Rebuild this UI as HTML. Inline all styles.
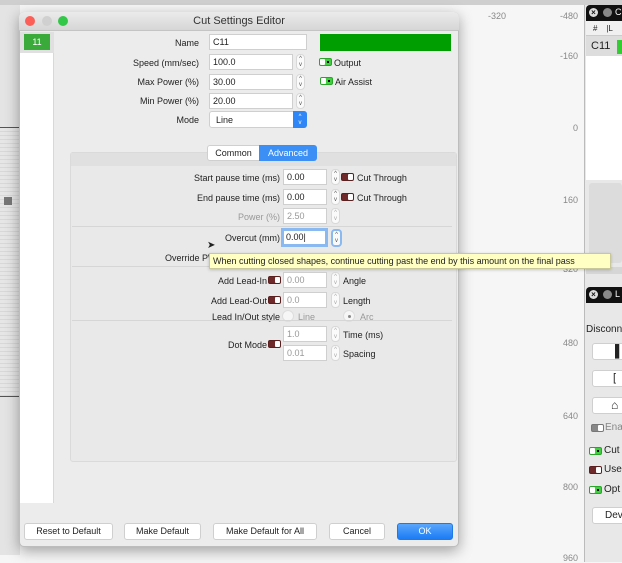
<!DOCTYPE html>
<html><head><meta charset="utf-8"><style>
*{box-sizing:border-box;margin:0;padding:0}
body{width:622px;height:562px;overflow:hidden;position:relative;background:#f6f6f6;font-family:"Liberation Sans",sans-serif;font-size:9px;color:#222}
.a{position:absolute}
.lbl{position:absolute;text-align:right;white-space:nowrap}
.in{position:absolute;background:#fff;border:1px solid #cfcfcf;height:16px;padding-left:3px;line-height:14px;font-size:9px}
.dis{color:#999}
.st{position:absolute;width:9px;height:16px;border:1px solid #d8d8d8;border-radius:4px;background:#fafafa;font-size:6px;line-height:6px;text-align:center;color:#555;padding-top:1px}
.tg{position:absolute;width:13px;height:8px;border-radius:2px;background:#6e2a2a;border:1px solid #5a2020}
.tg::after{content:"";position:absolute;right:0;top:0;width:5px;height:6px;background:#fff;border-radius:1px}
.tgg{background:#3fcf3f;border-color:#2aa52a}
.tgg::after{left:0;right:auto;background:#fff}
.tgg::before{content:"";position:absolute;right:2px;top:2px;width:2px;height:2px;background:#000}
.btn{position:absolute;height:17px;background:#fff;border:1px solid #cfcfcf;border-radius:3px;text-align:center;line-height:15px;font-size:9px}
.num{position:absolute;color:#888;font-size:9px;text-align:right;width:30px}
</style></head><body>
<div class="a" style="left:0;top:0;width:622px;height:5px;background:#cfcfcf"></div>
<div class="a" style="left:0;top:5px;width:20px;height:550px;background:#e4e4e4"></div>
<div class="a" style="left:0;top:127px;width:20px;height:270px;background:repeating-linear-gradient(0deg,#d8d8d8 0 1px,#e6e6e6 1px 4px),#e6e6e6;border-top:1px solid #555;border-bottom:1px solid #555"></div>
<div class="a" style="left:4px;top:197px;width:8px;height:8px;background:#777"></div>
<div class="num" style="left:476px;top:11px">-320</div>
<div class="num" style="left:548px;top:11px">-480</div>
<div class="num" style="left:548px;top:51px">-160</div>
<div class="num" style="left:548px;top:123px">0</div>
<div class="num" style="left:548px;top:195px">160</div>
<div class="num" style="left:548px;top:264px">320</div>
<div class="num" style="left:548px;top:338px">480</div>
<div class="num" style="left:548px;top:411px">640</div>
<div class="num" style="left:548px;top:482px">800</div>
<div class="num" style="left:548px;top:553px">960</div>
<div class="a" style="left:584px;top:5px;width:38px;height:557px;background:#e8e8e8;border-left:1px solid #bbb"></div>
<div class="a" style="left:586px;top:5px;width:36px;height:16px;background:#111;border-radius:4px 0 0 0"></div>
<div class="a" style="left:589px;top:8px;width:9px;height:9px;border-radius:50%;background:#ddd;color:#111;font-size:8px;line-height:9px;text-align:center;font-weight:bold">×</div>
<div class="a" style="left:603px;top:8px;width:9px;height:9px;border-radius:50%;background:#888"></div>
<div class="a" style="left:615px;top:7px;color:#fff;font-size:9px">C</div>
<div class="a" style="left:586px;top:21px;width:36px;height:15px;background:#f0f0f0;border-bottom:1px solid #ccc;font-size:8px;padding:3px 0 0 7px">#&nbsp;&nbsp;&nbsp;&nbsp;|L</div>
<div class="a" style="left:586px;top:36px;width:36px;height:20px;background:#ddd;font-size:11px;padding:4px 0 0 5px">C11</div>
<div class="a" style="left:617px;top:40px;width:5px;height:14px;background:#3c3"></div>
<div class="a" style="left:586px;top:56px;width:36px;height:124px;background:#fff"></div>
<div class="a" style="left:589px;top:183px;width:33px;height:80px;background:#dcdcdc;border-radius:3px"></div>
<div class="a" style="left:586px;top:267px;width:36px;height:7px;background:#d6d6d6"></div>
<div class="a" style="left:586px;top:287px;width:36px;height:16px;background:#111;border-radius:4px 0 0 0"></div>
<div class="a" style="left:589px;top:290px;width:9px;height:9px;border-radius:50%;background:#ddd;color:#111;font-size:8px;line-height:9px;text-align:center;font-weight:bold">×</div>
<div class="a" style="left:603px;top:290px;width:9px;height:9px;border-radius:50%;background:#888"></div>
<div class="a" style="left:615px;top:289px;color:#fff;font-size:9px">L</div>
<div class="a" style="left:586px;top:324px;font-size:10px;white-space:nowrap">Disconn</div>
<div class="btn" style="left:592px;top:343px;width:40px;font-weight:bold;font-size:12px;text-align:left;padding-left:22px">▌</div>
<div class="btn" style="left:592px;top:370px;width:40px;font-size:11px;text-align:left;padding-left:20px">[</div>
<div class="btn" style="left:592px;top:397px;width:40px;font-size:12px;text-align:left;padding-left:18px">⌂</div>
<div class="tg" style="left:591px;top:424px;background:#888;border-color:#777"></div>
<div class="a" style="left:605px;top:422px;font-size:10px;color:#888">Ena</div>
<div class="tg tgg" style="left:589px;top:447px"></div><div class="a" style="left:604px;top:445px;font-size:10px">Cut</div>
<div class="tg" style="left:589px;top:466px"></div><div class="a" style="left:604px;top:464px;font-size:10px">Use</div>
<div class="tg tgg" style="left:589px;top:486px"></div><div class="a" style="left:604px;top:484px;font-size:10px">Opt</div>
<div class="btn" style="left:592px;top:507px;width:40px;font-size:10px;text-align:left;padding-left:12px">Dev</div>

<div class="a" style="left:19px;top:12px;width:440px;height:535px;background:#ececec;border-radius:5px;box-shadow:0 4px 14px rgba(0,0,0,.35);border:1px solid #bdbdbd"></div>
<div class="a" style="left:19px;top:12px;width:440px;height:19px;background:linear-gradient(#ebebeb,#d6d6d6);border-radius:5px 5px 0 0;border-bottom:1px solid #c4c4c4;text-align:center;font-size:11px;line-height:19px;color:#333">Cut Settings Editor</div>
<div class="a" style="left:25px;top:16px;width:10px;height:10px;border-radius:50%;background:#fc5f57"></div>
<div class="a" style="left:42px;top:16px;width:10px;height:10px;border-radius:50%;background:#d0d0d0"></div>
<div class="a" style="left:58px;top:16px;width:10px;height:10px;border-radius:50%;background:#33c748"></div>
<div class="a" style="left:20px;top:32px;width:34px;height:471px;background:#fff;border-right:1px solid #d8d8d8"></div>
<div class="a" style="left:20px;top:32px;width:34px;height:21px;background:#e0e0e0"></div>
<div class="a" style="left:24px;top:34px;width:26px;height:16px;background:#3aaa3a;color:#fff;text-align:center;line-height:16px;font-size:9px">11</div>

<div class="lbl" style="right:423px;top:38px">Name</div>
<div class="in" style="left:209px;top:34px;width:98px">C11</div>
<div class="a" style="left:320px;top:34px;width:131px;height:17px;background:#009e00"></div>
<div class="lbl" style="right:423px;top:58px">Speed (mm/sec)</div>
<div class="in" style="left:209px;top:54px;width:84px">100.0</div><div class="st" style="left:296px;top:54px">^<br>v</div>
<div class="tg tgg" style="left:319px;top:58px"></div><div class="a" style="left:334px;top:58px">Output</div>
<div class="lbl" style="right:423px;top:77px">Max Power (%)</div>
<div class="in" style="left:209px;top:74px;width:84px">30.00</div><div class="st" style="left:296px;top:74px">^<br>v</div>
<div class="tg tgg" style="left:320px;top:77px"></div><div class="a" style="left:335px;top:77px">Air Assist</div>
<div class="lbl" style="right:423px;top:96px">Min Power (%)</div>
<div class="in" style="left:209px;top:93px;width:84px">20.00</div><div class="st" style="left:296px;top:93px">^<br>v</div>
<div class="lbl" style="right:423px;top:115px">Mode</div>
<div class="a" style="left:209px;top:111px;width:98px;height:17px;background:#fff;border:1px solid #cfcfcf;border-radius:3px;padding:3px 0 0 6px">Line</div>
<div class="a" style="left:293px;top:111px;width:14px;height:17px;background:#2f86f6;border-radius:0 3px 3px 0;color:#fff;font-size:6px;line-height:6px;text-align:center;padding-top:3px">^<br>v</div>

<div class="a" style="left:70px;top:152px;width:387px;height:310px;background:#e9e9e9;border:1px solid #dadada;border-radius:3px"></div>
<div class="a" style="left:71px;top:153px;width:385px;height:13px;background:#e0e0e0"></div>
<div class="a" style="left:207px;top:145px;width:53px;height:16px;background:#fff;border:1px solid #cfcfcf;border-radius:3px 0 0 3px;text-align:center;line-height:14px">Common</div>
<div class="a" style="left:259px;top:145px;width:58px;height:16px;background:#3b8ff5;border-radius:0 3px 3px 0;color:#fff;text-align:center;line-height:16px">Advanced</div>

<div class="lbl" style="right:342px;top:173px">Start pause time (ms)</div>
<div class="in" style="left:283px;top:169px;width:44px">0.00</div><div class="st" style="left:331px;top:169px">^<br>v</div>
<div class="tg" style="left:341px;top:173px"></div><div class="a" style="left:357px;top:173px">Cut Through</div>
<div class="lbl" style="right:342px;top:193px">End pause time (ms)</div>
<div class="in" style="left:283px;top:189px;width:44px">0.00</div><div class="st" style="left:331px;top:189px">^<br>v</div>
<div class="tg" style="left:341px;top:193px"></div><div class="a" style="left:357px;top:193px">Cut Through</div>
<div class="lbl dis" style="right:342px;top:212px">Power (%)</div>
<div class="in dis" style="left:283px;top:208px;width:44px">2.50</div><div class="st" style="left:331px;top:208px;color:#aaa">^<br>v</div>
<div class="a" style="left:72px;top:226px;width:380px;height:1px;background:#d6d6d6"></div>
<div class="lbl" style="right:342px;top:233px">Overcut (mm)</div>
<div class="in" style="left:281px;top:228px;width:47px;height:19px;border:3px solid #8ab8f0;padding-left:2px;line-height:13px">0.00|</div>
<div class="st" style="left:331px;top:229px;border:2px solid #8ab8f0;width:11px;height:18px">^<br>v</div>
<div class="lbl" style="left:165px;top:253px">Override PW</div>
<div class="a" style="left:72px;top:266px;width:380px;height:1px;background:#d6d6d6"></div>
<div class="a" style="left:209px;top:253px;width:402px;height:16px;background:#ffffc4;border:1px solid #c8c89c;padding:2px 0 0 3px;white-space:nowrap;font-size:9px;box-shadow:0 1px 3px rgba(0,0,0,.2)">When cutting closed shapes, continue cutting past the end by this amount on the final pass</div>
<div class="a" style="left:207px;top:240px;font-size:10px">➤</div>

<div class="lbl" style="right:355px;top:276px">Add Lead-In</div>
<div class="tg" style="left:268px;top:276px"></div>
<div class="in dis" style="left:283px;top:272px;width:44px">0.00</div><div class="st" style="left:331px;top:272px;color:#aaa">^<br>v</div>
<div class="a" style="left:343px;top:276px">Angle</div>
<div class="lbl" style="right:355px;top:296px">Add Lead-Out</div>
<div class="tg" style="left:268px;top:296px"></div>
<div class="in dis" style="left:283px;top:292px;width:44px">0.0</div><div class="st" style="left:331px;top:292px;color:#aaa">^<br>v</div>
<div class="a" style="left:343px;top:296px">Length</div>
<div class="lbl" style="right:342px;top:312px">Lead In/Out style</div>
<div class="a" style="left:282px;top:310px;width:12px;height:12px;border-radius:50%;background:#f6f6f6;border:1px solid #ddd"></div>
<div class="a dis" style="left:298px;top:312px">Line</div>
<div class="a" style="left:343px;top:310px;width:12px;height:12px;border-radius:50%;background:#f6f6f6;border:1px solid #ddd"></div>
<div class="a" style="left:348px;top:315px;width:3px;height:3px;border-radius:50%;background:#888"></div>
<div class="a dis" style="left:360px;top:312px">Arc</div>
<div class="a" style="left:72px;top:320px;width:380px;height:1px;background:#d6d6d6"></div>
<div class="in dis" style="left:283px;top:326px;width:44px">1.0</div><div class="st" style="left:331px;top:326px;color:#aaa">^<br>v</div>
<div class="a" style="left:343px;top:330px">Time (ms)</div>
<div class="lbl" style="right:355px;top:340px">Dot Mode</div>
<div class="tg" style="left:268px;top:340px"></div>
<div class="in dis" style="left:283px;top:345px;width:44px">0.01</div><div class="st" style="left:331px;top:345px;color:#aaa">^<br>v</div>
<div class="a" style="left:343px;top:349px">Spacing</div>

<div class="btn" style="left:24px;top:523px;width:89px">Reset to Default</div>
<div class="btn" style="left:124px;top:523px;width:77px">Make Default</div>
<div class="btn" style="left:213px;top:523px;width:104px">Make Default for All</div>
<div class="btn" style="left:329px;top:523px;width:56px">Cancel</div>
<div class="btn" style="left:397px;top:523px;width:56px;background:linear-gradient(#5aa6fb,#1b7cf5);border-color:#1f7ae8;color:#fff">OK</div>
</body></html>
